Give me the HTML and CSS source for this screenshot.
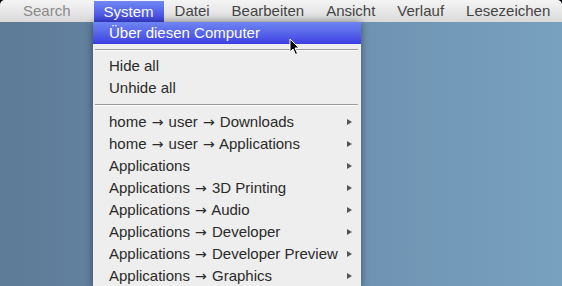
FILE: index.html
```html
<!DOCTYPE html>
<html>
<head>
<meta charset="utf-8">
<link rel="stylesheet" href="styles.css">
</head>
<body>
<div class="screen">
  <div class="menubar">
    <span class="mb-item mb-search">Search</span>
    <span class="mb-item mb-active">System</span>
    <span class="mb-item">Datei</span>
    <span class="mb-item">Bearbeiten</span>
    <span class="mb-item">Ansicht</span>
    <span class="mb-item">Verlauf</span>
    <span class="mb-item">Lesezeichen</span>
  </div>
  <div class="desktop">
    <div class="menu">
      <div class="mi mi-hl">Über diesen Computer</div>
      <div class="sep"></div>
      <div class="mi">Hide all</div>
      <div class="mi">Unhide all</div>
      <div class="sep sep2"></div>
      <div class="mi sub"><span>home <span class="arr">→</span> user <span class="arr">→</span> Downloads</span></div>
      <div class="mi sub"><span>home <span class="arr">→</span> user <span class="arr">→</span> Applications</span></div>
      <div class="mi sub"><span>Applications</span></div>
      <div class="mi sub"><span>Applications <span class="arr">→</span> 3D Printing</span></div>
      <div class="mi sub"><span>Applications <span class="arr">→</span> Audio</span></div>
      <div class="mi sub"><span>Applications <span class="arr">→</span> Developer</span></div>
      <div class="mi sub"><span>Applications <span class="arr">→</span> Developer Preview</span></div>
      <div class="mi sub"><span>Applications <span class="arr">→</span> Graphics</span></div>
    </div>
    <svg class="cursor" width="12" height="18" viewBox="0 0 12 18"><path d="M1 1 L1 14 L4 11 L6.5 16.5 L8.5 15.5 L6 10 L10 10 Z" fill="#000" stroke="#fff" stroke-width="1"/></svg>
  </div>
</div>
</body>
</html>
```
FILE: styles.css
```css
html, body { margin: 0; padding: 0; }
body {
  width: 562px; height: 286px; overflow: hidden;
  font-family: "Liberation Sans", Arial, sans-serif;
  background: #000;
}
.screen {
  width: 562px; height: 286px;
  display: flex; flex-direction: column;
  border-radius: 5px 5px 0 0;
  overflow: hidden;
  background: linear-gradient(to right, #5d7b97 0%, #6a8cab 45%, #78a1bf 100%);
}
.menubar {
  height: 22px;
  flex: none;
  display: flex;
  align-items: stretch;
  background: linear-gradient(to bottom, #f4f4f4 0%, #e8e8e8 50%, #d9d9d9 100%);
  font-size: 15px;
  color: #444;
  padding-left: 13px;
}
.mb-item {
  display: flex; align-items: center;
  padding: 0 11px;
  line-height: 22px;
}
.mb-search { color: #8a8a8a; padding: 0 10px; margin-right: 13px; }
.mb-active {
  color: #fff;
  padding: 0 10px;
  margin-top: 1px;
  background: linear-gradient(to bottom, #7088f2 0%, #5565ea 50%, #3f42e2 100%);
}
.desktop {
  flex: 1;
  position: relative;
  padding-left: 93px;
}
.menu {
  width: 268px;
  height: 100%;
  background: #eeeeee;
  box-shadow: 0 0 8px rgba(0,0,0,0.45);
  font-size: 15px;
  color: #2a2a2a;
  display: flex; flex-direction: column;
}
.mi {
  height: 22px; line-height: 22px;
  padding-left: 16px;
  padding-right: 9px;
  display: flex; justify-content: space-between; align-items: center;
  white-space: nowrap;
  flex: none;
}
.arr {
  font-family: "DejaVu Sans", sans-serif;
  font-size: 14px;
  margin: 0 1px;
}
.mi-hl {
  color: #fff;
  background: linear-gradient(to bottom, #6e84f2 0%, #5766ea 50%, #3d3ee3 100%);
}
.sub::after {
  content: "";
  width: 0; height: 0;
  border-left: 5px solid #555;
  border-top: 3.5px solid transparent;
  border-bottom: 3.5px solid transparent;
}
.sep {
  height: 11px; flex: none;
  position: relative;
}
.sep::before {
  content: "";
  position: absolute;
  left: 2px; right: 3px; top: 5px;
  height: 1px;
  background: #9c9c9c;
  border-bottom: 1px solid #fafafa;
}
.sep2 { height: 12px; }
.cursor {
  position: absolute;
  left: 289px; top: 16px;
}
```
